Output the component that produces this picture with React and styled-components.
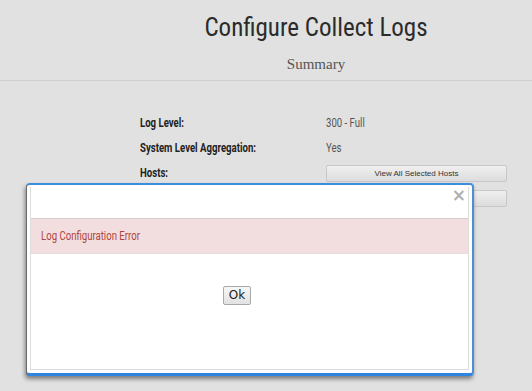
import React from 'react';
import styled, { createGlobalStyle } from 'styled-components';

const GlobalStyle = createGlobalStyle`
  html, body {
    margin: 0;
    padding: 0;
    background: #e1e1e1;
  }
  body {
    font-family: Roboto, "Liberation Sans", sans-serif;
    width: 532px;
    height: 391px;
    overflow: hidden;
    position: relative;
  }
`;

const summary = [
  { label: 'Log Level:', value: '300 - Full' },
  { label: 'System Level Aggregation:', value: 'Yes' },
  { label: 'Hosts:', button: 'View All Selected Hosts' },
  { label: '', button: '' },
];

const Page = styled.div`
  padding-left: 100px;
`;

const Header = styled.div`
  text-align: center;
  border-bottom: 1px solid #cfcfcf;
  padding-top: 13px;
  height: 67px;
  margin-left: -100px;
  padding-left: 100px;
`;

const Title = styled.h1`
  margin: 0;
  font-family: "Roboto Condensed", "Liberation Serif", serif;
  font-size: 25px;
  font-weight: normal;
  color: #2b2b2b;
  line-height: 30px;
`;

const Subtitle = styled.div`
  margin-top: 13px;
  font-family: "Liberation Sans Narrow", "Liberation Serif", serif;
  font-size: 15px;
  color: #555;
`;

const SummaryGrid = styled.div`
  display: grid;
  grid-template-columns: 186px 181px;
  grid-auto-rows: 25px;
  padding: 29px 0 0 40px;
  align-items: center;
`;

const Narrow = styled.span`
  display: inline-block;
  transform: scaleX(0.8);
  transform-origin: left center;
  white-space: nowrap;
`;

const Label = styled.div`
  font-size: 12px;
  font-weight: bold;
  color: #222;
`;

const Value = styled.div`
  font-size: 12px;
  color: #555;
`;

const GrayButton = styled.div`
  height: 15px;
  border: 1px solid #c8c8c8;
  border-radius: 2px;
  background: linear-gradient(#f0f0f0, #dcdcdc);
  font-family: "Liberation Sans", Arial, sans-serif;
  font-size: 8px;
  color: #333;
  display: flex;
  align-items: center;
  justify-content: center;
  margin-top: 2px;
`;

const Dialog = styled.div`
  position: absolute;
  left: 26px;
  top: 183px;
  width: 439px;
  height: 183px;
  background: #fff;
  border-top: 2px solid #3c8ddb;
  border-left: 1px solid #6a6a6a;
  border-right: 2px solid #4a8fd6;
  border-bottom: 3px solid #2f86e0;
  border-radius: 4px;
  box-shadow: -1px 3px 4px rgba(0, 0, 0, 0.45);
  padding: 2px 3px 3px 3px;
  display: flex;
`;

const DialogInner = styled.div`
  flex: 1;
  border: 1px solid #dcdcdc;
  border-top: none;
  display: flex;
  flex-direction: column;
`;

const DialogTop = styled.div`
  height: 31px;
  display: flex;
  justify-content: flex-end;
  align-items: flex-start;
`;

const Close = styled.span`
  font-family: "DejaVu Sans", sans-serif;
  font-weight: bold;
  font-size: 17px;
  line-height: 17px;
  color: #b0b0b0;
  margin: 0 2px 0 0;
`;

const Alert = styled.div`
  height: 34px;
  background: #f2dede;
  border-top: 1px solid #d6cccc;
  border-bottom: 1px solid #e8dede;
  color: #b04440;
  font-size: 12px;
  display: flex;
  align-items: center;
  padding-left: 10px;
`;

const Actions = styled.div`
  padding: 30px 0 0 192px;
`;

const OkButton = styled.button`
  font-family: "DejaVu Sans", sans-serif;
  font-size: 12px;
  color: #222;
  height: 19px;
  width: 28px;
  padding: 0;
  border: 1px solid #a9a9a9;
  border-radius: 2px;
  background: linear-gradient(#f6f6f6, #e2e2e2);
`;

export default function App() {
  return (
    <>
      <GlobalStyle />
      <Page>
        <Header>
          <Title>Configure Collect Logs</Title>
          <Subtitle>Summary</Subtitle>
        </Header>
        <SummaryGrid>
          {summary.map((row, i) => (
            <React.Fragment key={i}>
              <Label>
                <Narrow>{row.label}</Narrow>
              </Label>
              {row.button !== undefined ? (
                <GrayButton>{row.button}</GrayButton>
              ) : (
                <Value>
                  <Narrow>{row.value}</Narrow>
                </Value>
              )}
            </React.Fragment>
          ))}
        </SummaryGrid>
      </Page>
      <Dialog>
        <DialogInner>
          <DialogTop>
            <Close>×</Close>
          </DialogTop>
          <Alert>
            <Narrow>Log Configuration Error</Narrow>
          </Alert>
          <Actions>
            <OkButton>Ok</OkButton>
          </Actions>
        </DialogInner>
      </Dialog>
    </>
  );
}
